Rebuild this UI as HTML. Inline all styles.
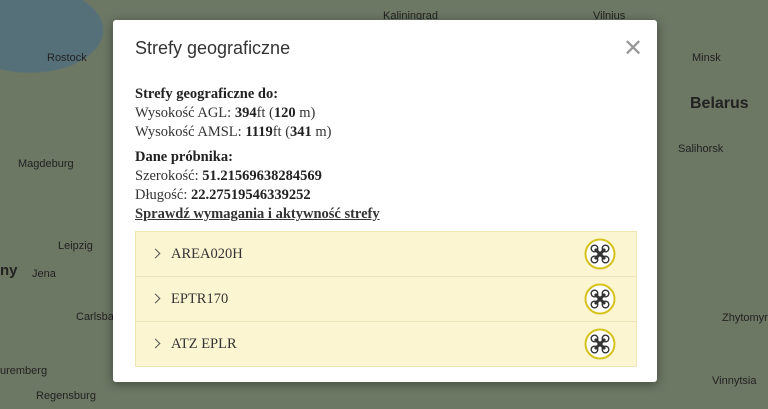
<!DOCTYPE html>
<html><head><meta charset="utf-8"><style>
html,body{margin:0;padding:0;width:768px;height:409px;overflow:hidden;background:#6f7a66;font-family:"Liberation Serif",serif}
.map{position:absolute;inset:0;background:
radial-gradient(ellipse 120px 70px at 30px 30px,#56707a 60%,transparent 62%),
linear-gradient(#6c7764,#6c7764)}
.lbl{position:absolute;font-family:"Liberation Sans",sans-serif;color:#222;font-size:11px}
.modal{position:absolute;left:113px;top:20px;width:544px;height:362px;background:#fff;border-radius:3px;box-shadow:0 2px 10px rgba(0,0,0,.4)}
h1{position:absolute;left:22px;top:18px;margin:0;font:18px "Liberation Sans",sans-serif;color:#333}
.x{position:absolute;left:510px;top:14px;font:24px "Liberation Sans",sans-serif;color:#999}
.body{position:absolute;left:22px;top:65px;font-size:14.5px;line-height:19px;color:#333}
.body b{color:#222}
.sp{height:6px}
a{color:#333;font-weight:bold;text-decoration:underline}
.acc{position:absolute;left:22px;top:211px;width:500px;border:1px solid #efe6b8;background:#fcf5d2}
.row{height:44px;border-top:1px solid #ede3bb;position:relative;font-size:14.5px;color:#333}
.row:first-child{border-top:none}
.row span{position:absolute;left:35px;top:14px}
.row i{position:absolute;left:16px;top:18px;width:6px;height:6px;border-right:1.5px solid #555;border-top:1.5px solid #555;transform:rotate(45deg)}
.row svg{position:absolute;left:448px;top:6px}
</style></head><body>
<div class="map"></div>
<div class="lbl" style="left:47px;top:52px">Rostock</div>
<div class="lbl" style="left:383px;top:10px">Kaliningrad</div>
<div class="lbl" style="left:593px;top:10px">Vilnius</div>
<div class="lbl" style="left:692px;top:52px">Minsk</div>
<div class="lbl" style="left:690px;top:95px;font-size:16px;font-weight:bold">Belarus</div>
<div class="lbl" style="left:678px;top:143px">Salihorsk</div>
<div class="lbl" style="left:18px;top:158px">Magdeburg</div>
<div class="lbl" style="left:58px;top:240px">Leipzig</div>
<div class="lbl" style="left:32px;top:268px">Jena</div>
<div class="lbl" style="left:0;top:262px;font-size:15px;font-weight:bold">ny</div>
<div class="lbl" style="left:76px;top:311px">Carlsbad</div>
<div class="lbl" style="left:0;top:365px">uremberg</div>
<div class="lbl" style="left:36px;top:390px">Regensburg</div>
<div class="lbl" style="left:722px;top:312px">Zhytomyr</div>
<div class="lbl" style="left:712px;top:375px">Vinnytsia</div>
<div class="modal">
<h1>Strefy geograficzne</h1>
<div class="x">✕</div>
<div class="body">
<b>Strefy geograficzne do:</b><br>
Wysokość AGL: <b>394</b>ft (<b>120</b> m)<br>
Wysokość AMSL: <b>1119</b>ft (<b>341</b> m)<br>
<div class="sp"></div>
<b>Dane próbnika:</b><br>
Szerokość: <b>51.21569638284569</b><br>
Długość: <b>22.27519546339252</b><br>
<a>Sprawdź wymagania i aktywność strefy</a>
</div>
<div class="acc">
<div class="row"><i></i><span>AREA020H</span><svg width="32" height="32" viewBox="0 0 32 32"><circle cx="16" cy="16" r="14.5" fill="#fff" stroke="#d6c21c" stroke-width="2"/><g stroke="#333" fill="none" stroke-width="1.4"><circle cx="10.5" cy="10.5" r="3.3"/><circle cx="21.5" cy="10.5" r="3.3"/><circle cx="10.5" cy="21.5" r="3.3"/><circle cx="21.5" cy="21.5" r="3.3"/><path d="M11 11L21 21M21 11L11 21" stroke-width="3"/></g><rect x="13.5" y="13.5" width="5" height="5" fill="#333"/></svg></div>
<div class="row"><i></i><span>EPTR170</span><svg width="32" height="32" viewBox="0 0 32 32"><circle cx="16" cy="16" r="14.5" fill="#fff" stroke="#d6c21c" stroke-width="2"/><g stroke="#333" fill="none" stroke-width="1.4"><circle cx="10.5" cy="10.5" r="3.3"/><circle cx="21.5" cy="10.5" r="3.3"/><circle cx="10.5" cy="21.5" r="3.3"/><circle cx="21.5" cy="21.5" r="3.3"/><path d="M11 11L21 21M21 11L11 21" stroke-width="3"/></g><rect x="13.5" y="13.5" width="5" height="5" fill="#333"/></svg></div>
<div class="row"><i></i><span>ATZ EPLR</span><svg width="32" height="32" viewBox="0 0 32 32"><circle cx="16" cy="16" r="14.5" fill="#fff" stroke="#d6c21c" stroke-width="2"/><g stroke="#333" fill="none" stroke-width="1.4"><circle cx="10.5" cy="10.5" r="3.3"/><circle cx="21.5" cy="10.5" r="3.3"/><circle cx="10.5" cy="21.5" r="3.3"/><circle cx="21.5" cy="21.5" r="3.3"/><path d="M11 11L21 21M21 11L11 21" stroke-width="3"/></g><rect x="13.5" y="13.5" width="5" height="5" fill="#333"/></svg></div>
</div>
</div>
</body></html>
